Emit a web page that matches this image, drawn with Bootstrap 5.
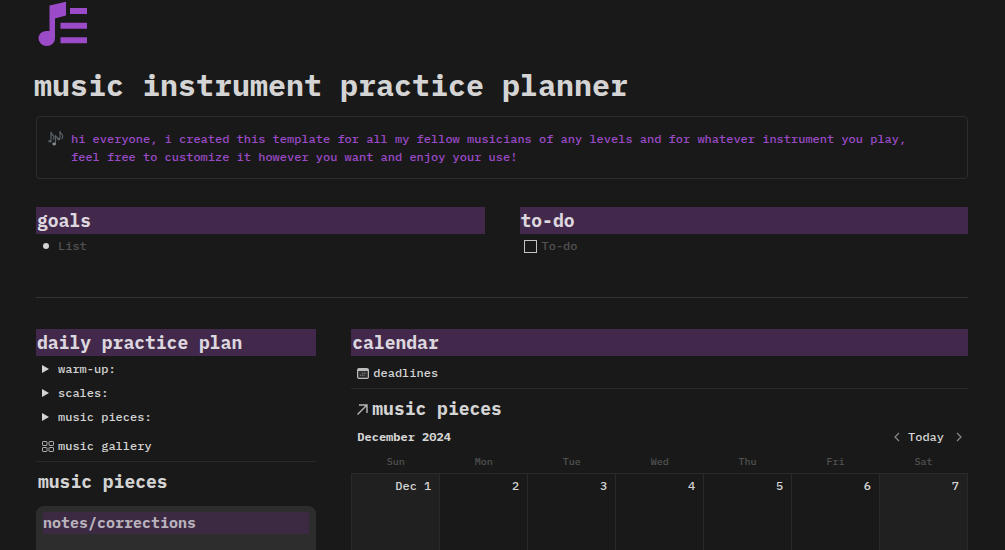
<!DOCTYPE html>
<html lang="en" data-bs-theme="dark">
<head>
<meta charset="utf-8">
<meta name="viewport" content="width=device-width, initial-scale=1">
<title>music instrument practice planner</title>
<link href="https://cdn.jsdelivr.net/npm/bootstrap@5.3.0/dist/css/bootstrap.min.css" rel="stylesheet">
<style>
:root { --line: #2a2a2a; --ink: #d4d4d4; --soft: #525252; --purple: #9a4ac6; --band: #42284a; }
body { background: #191919; color: var(--ink); font-family: "IBM Plex Mono", "DejaVu Sans Mono", monospace; font-size: 12px; font-weight: 500; line-height: 18px; }
.planner { padding: 0 37px 0 36px; }
.page-icon { display: block; width: 54px; height: 48px; }
.page-title { color: var(--ink); font-size: 30px; line-height: 36px; font-weight: 700; margin: 19px 0 13px -2px; }
.callout { border: 1px solid #2d2d2d; border-radius: 4px; padding: 13px 11px 12px; gap: 7px; color: var(--purple); }
.band { background: var(--band); color: #dcd6de; font-size: 18px; line-height: 27px; font-weight: 700; padding: 0 1px; margin: 0; }
.two-up { display: grid; grid-template-columns: 1fr 1fr; gap: 35px; margin-top: 28px; min-height: 90px; align-items: start; }
.split { display: grid; grid-template-columns: 5fr 11fr; gap: 35px; margin-top: 31px; align-items: start; }
.rule { border-color: #333; opacity: 1; margin: 0; }
.entry { color: var(--soft); padding-top: 3px; }
.dot { width: 6px; height: 6px; border-radius: 50%; background: var(--ink); margin: 0 9px 0 7px; }
.todo-box { appearance: none; width: 13px; height: 13px; border: 1px solid #c4c4c4; margin: 0 5px 0 4px; background: transparent; }
.todo-box:checked { background: var(--purple); }
.toggles { padding: 1px 0 8px; }
details summary { list-style: none; display: flex; align-items: center; gap: 9px; padding-left: 6px; height: 24px; }
details summary::-webkit-details-marker { display: none; }
.tab-link { color: var(--ink); text-decoration: none; border-bottom: 1px solid var(--line); gap: 4px; padding: 0 6px 6px; }
.db-title { color: var(--ink); font-size: 18px; line-height: 26px; font-weight: 700; margin: 0; }
.gallery-title { padding: 7px 2px 0; }
.linked-title { gap: 4px; padding: 7px 6px 0; }
.note-card { background: #2d2d2d; border-radius: 8px; padding: 6px 7px; min-height: 120px; margin-top: 11px; }
.note-band { background: #3c2a43; color: #b9b1bc; font-size: 15px; line-height: 22px; font-weight: 700; padding: 0; margin: 0; }
.month-bar { padding: 6px 6px 7px; }
.plain-btn { display: flex; align-items: center; background: none; border: 0; padding: 0; color: inherit; font-weight: 500; line-height: 18px; }
.month { table-layout: fixed; width: 100%; border-collapse: collapse; }
.month th { color: var(--soft); font-size: 10px; line-height: 16px; font-weight: 500; text-align: center; padding-bottom: 3px; }
.month td { border: 1px solid var(--line); height: 110px; vertical-align: top; text-align: right; padding: 3px 8px; }
.month td:first-child, .month td:last-child { background: #202020; }
</style>
</head>
<body>
<main class="planner vh-100 overflow-hidden">
  <svg class="page-icon" viewBox="0 0 54 48" fill="#9b4ac8" aria-hidden="true">
    <path d="M13.500 5.500 30 1.700V15.500L19 18.500V38A8.300 7.600 0 0 1 10.700 46 8.300 7.600 0 0 1 2.500 38.500C2.500 34 6 31 10.500 31H13.500Z"/>
    <path d="M34 8h17v6H34zM24.500 22.700H51v6H24.500zM24.500 37.300H51v6H24.500z"/>
  </svg>
  <h1 class="page-title">music instrument practice planner</h1>
  <section class="callout d-flex align-items-start">
    <svg width="16" height="17" viewBox="0 0 16 17" fill="none" stroke="#596066" stroke-width="1.200" class="flex-shrink-0" aria-hidden="true">
      <path d="M3 10.500V2q1 3 3 4.500 0 2-1 3M12 8V1q.3 2 2 3.500 1.500 2-.2 4.500"/>
      <path d="M7.500 13V6q2 2 3 3"/>
      <g fill="#596066" stroke="none"><ellipse cx="2" cy="11.300" rx="1.700" ry="1.300"/><ellipse cx="10.800" cy="9" rx="1.700" ry="1.300"/><ellipse cx="6.200" cy="14" rx="1.900" ry="1.400" fill="#858b90"/></g>
    </svg>
    <p class="mb-0">hi everyone, i created this template for all my fellow musicians of any levels and for whatever instrument you play,<br>feel free to customize it however you want and enjoy your use!</p>
  </section>

  <div class="two-up">
    <section>
      <h2 class="band">goals</h2>
      <div class="entry d-flex align-items-center"><span class="dot"></span>List</div>
    </section>
    <section>
      <h2 class="band">to-do</h2>
      <div class="entry d-flex align-items-center"><input class="todo-box" type="checkbox" id="todo"><label for="todo">To-do</label></div>
    </section>
  </div>
  <hr class="rule">

  <div class="split">
    <section>
      <h2 class="band">daily practice plan</h2>
      <div class="toggles">
        <details><summary><svg width="7" height="8" viewBox="0 0 7 8" fill="currentColor"><path d="M0 0 7 4 0 8z"/></svg>warm-up:</summary></details>
        <details><summary><svg width="7" height="8" viewBox="0 0 7 8" fill="currentColor"><path d="M0 0 7 4 0 8z"/></svg>scales:</summary></details>
        <details><summary><svg width="7" height="8" viewBox="0 0 7 8" fill="currentColor"><path d="M0 0 7 4 0 8z"/></svg>music pieces:</summary></details>
      </div>
      <a class="tab-link d-flex align-items-center" href="#gallery">
        <svg width="12" height="11" viewBox="0 0 12 11" fill="none" stroke="#b0b0b0" aria-hidden="true"><rect x=".5" y=".5" width="4.500" height="4" rx=".6"/><rect x="7" y=".5" width="4.500" height="4" rx=".6"/><rect x=".5" y="6.500" width="4.500" height="4" rx=".6"/><rect x="7" y="6.500" width="4.500" height="4" rx=".6"/></svg>music gallery</a>
      <h3 class="db-title gallery-title" id="gallery">music pieces</h3>
      <article class="note-card"><h4 class="note-band">notes/corrections</h4></article>
    </section>

    <section>
      <h2 class="band">calendar</h2>
      <a class="tab-link d-flex align-items-center mt-2" href="#calendar">
        <svg width="12" height="11" viewBox="0 0 12 11" aria-hidden="true"><rect x=".6" y=".6" width="10.800" height="9.800" rx="1.500" fill="#303030" stroke="#bdbdbd" stroke-width="1.200"/><path d="M1 2h10" stroke="#bdbdbd" stroke-width="2"/><path d="M5 5.200h4M3 7.200h5" stroke="#858585" stroke-dasharray="1.200 .5"/></svg>deadlines</a>
      <h3 class="db-title linked-title d-flex align-items-center" id="calendar"><svg width="11" height="11" viewBox="0 0 11 11" fill="none" stroke="#b8b8b8" stroke-width="1.400" aria-hidden="true"><path d="M.5 10.500 10 1M2 1h8v8"/></svg>music pieces</h3>
      <div class="month-bar d-flex align-items-center justify-content-between">
        <strong>December 2024</strong>
        <div class="d-flex align-items-center gap-2">
          <button class="plain-btn" type="button" aria-label="Previous month"><svg width="6" height="10" viewBox="0 0 6 10" fill="none" stroke="#858585" stroke-width="1.300"><path d="M5 1 1 5l4 4"/></svg></button>
          <button class="plain-btn" type="button">Today</button>
          <button class="plain-btn ps-1" type="button" aria-label="Next month"><svg width="6" height="10" viewBox="0 0 6 10" fill="none" stroke="#858585" stroke-width="1.300"><path d="m1 1 4 4-4 4"/></svg></button>
        </div>
      </div>
      <table class="month">
        <thead><tr><th>Sun</th><th>Mon</th><th>Tue</th><th>Wed</th><th>Thu</th><th>Fri</th><th>Sat</th></tr></thead>
        <tbody><tr><td>Dec 1</td><td>2</td><td>3</td><td>4</td><td>5</td><td>6</td><td>7</td></tr></tbody>
      </table>
    </section>
  </div>
</main>
<script src="https://cdn.jsdelivr.net/npm/bootstrap@5.3.0/dist/js/bootstrap.bundle.min.js"></script>
</body>
</html>
